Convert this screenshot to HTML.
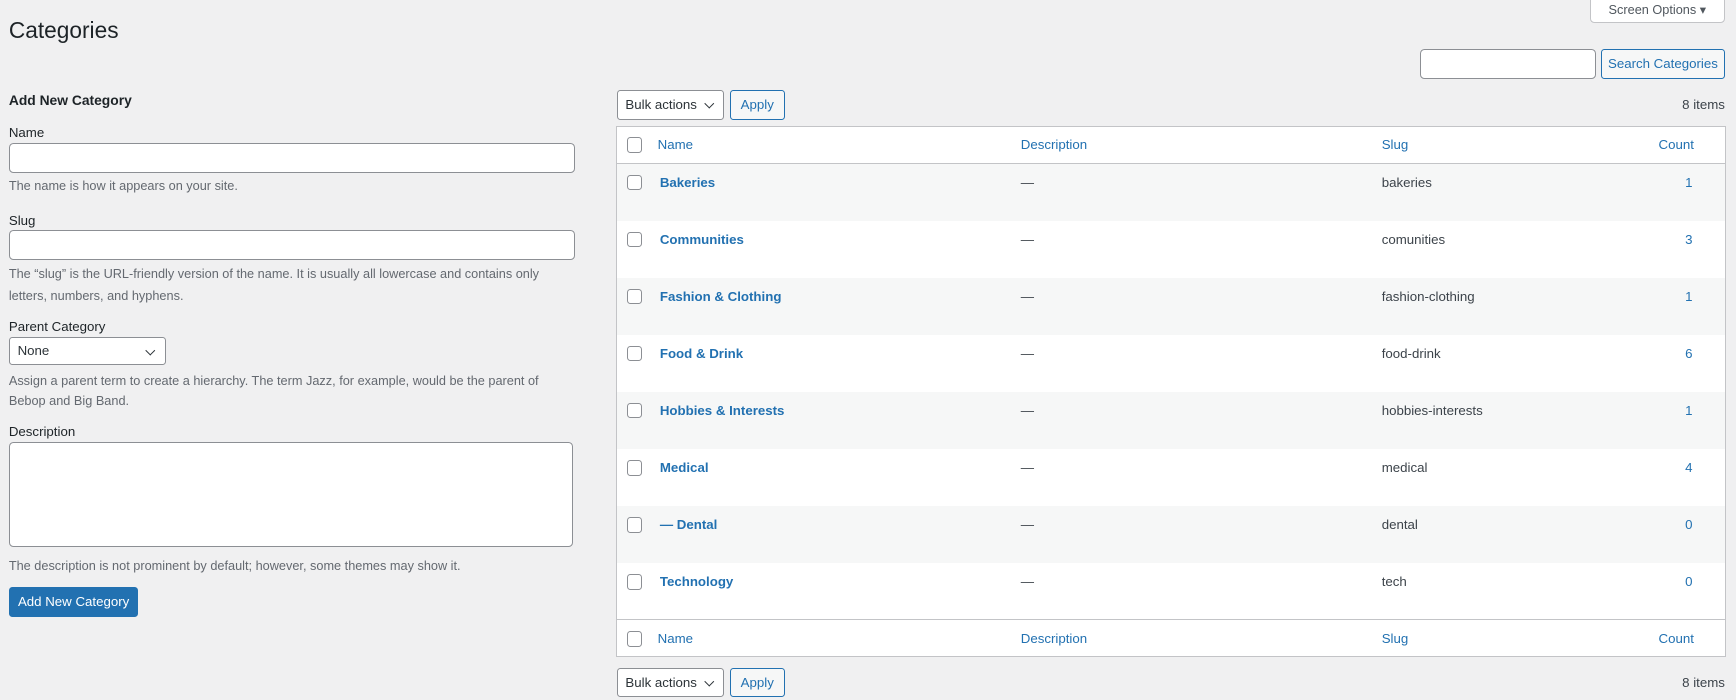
<!DOCTYPE html>
<html><head><meta charset="utf-8"><style>
html,body{margin:0;padding:0;background:#f0f0f1;overflow:hidden}
#w{zoom:1.10714;width:1568px;height:632px;position:relative;font-family:"Liberation Sans",sans-serif;font-size:12px;color:#3c434a}
.a{position:absolute;white-space:nowrap}
.inp{position:absolute;background:#fff;border:1px solid #8c8f94;border-radius:4px;box-sizing:border-box}
.btn2{position:absolute;box-sizing:border-box;border:1px solid #2271b1;color:#2271b1;background:#f6f7f7;border-radius:3px;text-align:center;font-size:12px}
.sel{position:absolute;box-sizing:border-box;border:1px solid #8c8f94;background:#fff;border-radius:3px;color:#2c3338;font-size:12px;padding-left:7px}
.help{color:#646970;font-size:11.5px}
.cb{position:absolute;width:14px;height:14px;border:1px solid #8c8f94;border-radius:3px;background:#fff;box-sizing:border-box}
.lnk{color:#2271b1}
.b{font-weight:bold}
.chev{position:absolute;width:5px;height:5px;border-right:1.3px solid #2c3338;border-bottom:1.3px solid #2c3338;transform:rotate(45deg)}
</style></head><body><div id="w">
<div class="a" style="left:8px;top:15px;font-size:20.5px;color:#1d2327">Categories</div>
<div class="a" style="left:1436px;top:-1px;width:122px;height:22px;background:#fff;border:1px solid #c3c4c7;border-top:none;border-radius:0 0 4px 4px;box-sizing:border-box;font-size:11.5px;color:#50575e;padding:3px 0 0 16px">Screen Options ▾</div>
<div class="inp" style="left:1283px;top:44px;width:159px;height:27px"></div>
<div class="btn2" style="left:1446px;top:44px;width:112px;height:27px;line-height:25px">Search Categories</div>

<div class="a b" style="left:8px;top:83px;font-size:12.5px;color:#1d2327">Add New Category</div>
<div class="a" style="left:8px;top:113px;color:#1d2327">Name</div>
<div class="inp" style="left:8px;top:129px;width:511px;height:27px"></div>
<div class="a help" style="left:8px;top:161px">The name is how it appears on your site.</div>
<div class="a" style="left:8px;top:192px;color:#1d2327">Slug</div>
<div class="inp" style="left:8px;top:208px;width:511px;height:27px"></div>
<div class="a help" style="left:8px;top:238px;line-height:19px">The “slug” is the URL-friendly version of the name. It is usually all lowercase and contains only<br>letters, numbers, and hyphens.</div>
<div class="a" style="left:8px;top:288px;color:#1d2327">Parent Category</div>
<div class="sel" style="left:8px;top:304px;width:142px;height:26px;line-height:24px">None</div>
<div class="chev" style="left:133px;top:313px"></div>
<div class="a help" style="left:8px;top:335px;line-height:18px">Assign a parent term to create a hierarchy. The term Jazz, for example, would be the parent of<br>Bebop and Big Band.</div>
<div class="a" style="left:8px;top:383px;color:#1d2327">Description</div>
<div class="inp" style="left:8px;top:399px;width:510px;height:95px"></div>
<div class="a help" style="left:8px;top:504px">The description is not prominent by default; however, some themes may show it.</div>
<div class="a" style="left:8px;top:530px;width:117px;height:27px;background:#2271b1;color:#fff;border-radius:3px;text-align:center;line-height:27px">Add New Category</div>

<div class="sel" style="left:557px;top:81px;width:97px;height:27px;line-height:25px">Bulk actions</div>
<div class="chev" style="left:638px;top:90px"></div>
<div class="btn2" style="left:659px;top:81px;width:50px;height:27px;line-height:25px">Apply</div>
<div class="a" style="right:10px;top:88px;color:#3c434a">8 items</div>

<div style="position:absolute;left:556px;top:114px;width:1003px;height:479px;border:1px solid #c3c4c7;box-sizing:border-box;background:#fff"></div>
<div style="position:absolute;left:557px;top:147px;width:1001px;height:1px;background:#c3c4c7"></div>
<div style="position:absolute;left:557px;top:559px;width:1001px;height:1px;background:#c3c4c7"></div>
<div class="cb" style="left:566px;top:124px"></div>
<div class="a lnk" style="left:594px;top:124px">Name</div>
<div class="a lnk" style="left:922px;top:124px">Description</div>
<div class="a lnk" style="left:1248px;top:124px">Slug</div>
<div class="a lnk" style="left:1498px;top:124px">Count</div>
<div class="cb" style="left:566px;top:570px"></div>
<div class="a lnk" style="left:594px;top:570px">Name</div>
<div class="a lnk" style="left:922px;top:570px">Description</div>
<div class="a lnk" style="left:1248px;top:570px">Slug</div>
<div class="a lnk" style="left:1498px;top:570px">Count</div>

<div style="position:absolute;left:557px;top:148px;width:1001px;height:51.5px;background:#f6f7f7"></div>
<div style="position:absolute;left:557px;top:251px;width:1001px;height:51.5px;background:#f6f7f7"></div>
<div style="position:absolute;left:557px;top:354px;width:1001px;height:51.5px;background:#f6f7f7"></div>
<div style="position:absolute;left:557px;top:457px;width:1001px;height:51.5px;background:#f6f7f7"></div>

<div class="cb" style="left:566px;top:158px"></div><div class="a lnk b" style="left:596px;top:158px">Bakeries</div><div class="a" style="left:922px;top:158px">—</div><div class="a" style="left:1248px;top:158px">bakeries</div><div class="a lnk" style="left:1522px;top:158px">1</div>
<div class="cb" style="left:566px;top:209.5px"></div><div class="a lnk b" style="left:596px;top:209.5px">Communities</div><div class="a" style="left:922px;top:209.5px">—</div><div class="a" style="left:1248px;top:209.5px">comunities</div><div class="a lnk" style="left:1522px;top:209.5px">3</div>
<div class="cb" style="left:566px;top:261px"></div><div class="a lnk b" style="left:596px;top:261px">Fashion &amp; Clothing</div><div class="a" style="left:922px;top:261px">—</div><div class="a" style="left:1248px;top:261px">fashion-clothing</div><div class="a lnk" style="left:1522px;top:261px">1</div>
<div class="cb" style="left:566px;top:312.5px"></div><div class="a lnk b" style="left:596px;top:312.5px">Food &amp; Drink</div><div class="a" style="left:922px;top:312.5px">—</div><div class="a" style="left:1248px;top:312.5px">food-drink</div><div class="a lnk" style="left:1522px;top:312.5px">6</div>
<div class="cb" style="left:566px;top:364px"></div><div class="a lnk b" style="left:596px;top:364px">Hobbies &amp; Interests</div><div class="a" style="left:922px;top:364px">—</div><div class="a" style="left:1248px;top:364px">hobbies-interests</div><div class="a lnk" style="left:1522px;top:364px">1</div>
<div class="cb" style="left:566px;top:415.5px"></div><div class="a lnk b" style="left:596px;top:415.5px">Medical</div><div class="a" style="left:922px;top:415.5px">—</div><div class="a" style="left:1248px;top:415.5px">medical</div><div class="a lnk" style="left:1522px;top:415.5px">4</div>
<div class="cb" style="left:566px;top:467px"></div><div class="a lnk b" style="left:596px;top:467px">— Dental</div><div class="a" style="left:922px;top:467px">—</div><div class="a" style="left:1248px;top:467px">dental</div><div class="a lnk" style="left:1522px;top:467px">0</div>
<div class="cb" style="left:566px;top:518.5px"></div><div class="a lnk b" style="left:596px;top:518.5px">Technology</div><div class="a" style="left:922px;top:518.5px">—</div><div class="a" style="left:1248px;top:518.5px">tech</div><div class="a lnk" style="left:1522px;top:518.5px">0</div>

<div class="sel" style="left:557px;top:603px;width:97px;height:27px;line-height:25px">Bulk actions</div>
<div class="chev" style="left:638px;top:612px"></div>
<div class="btn2" style="left:659px;top:603px;width:50px;height:27px;line-height:25px">Apply</div>
<div class="a" style="right:10px;top:610px">8 items</div>
</div></body></html>
